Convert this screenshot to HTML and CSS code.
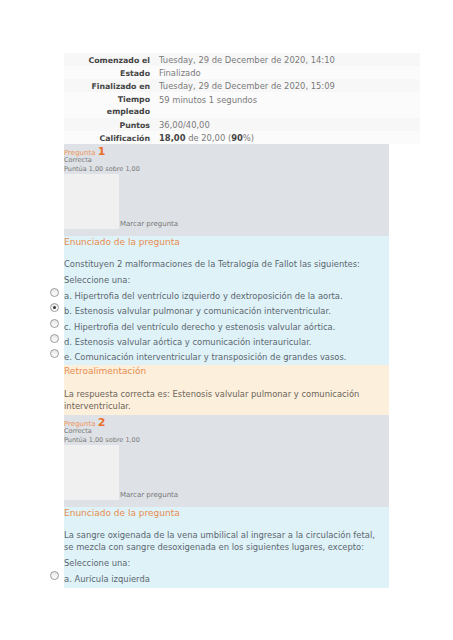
FILE: index.html
```html
<!DOCTYPE html>
<html lang="es">
<head>
<meta charset="utf-8">
<link rel="stylesheet" href="styles.css">
</head>
<body>
<div class="page">
  <table class="summary">
    <tr><th>Comenzado el</th><td>Tuesday, 29 de December de 2020, 14:10</td></tr>
    <tr><th>Estado</th><td>Finalizado</td></tr>
    <tr><th>Finalizado en</th><td>Tuesday, 29 de December de 2020, 15:09</td></tr>
    <tr class="two"><th>Tiempo<br>empleado</th><td>59 minutos 1 segundos</td></tr>
    <tr><th>Puntos</th><td>36,00/40,00</td></tr>
    <tr><th>Calificación</th><td><b>18,00</b> de 20,00 (<b>90</b>%)</td></tr>
  </table>

  <div class="que">
    <div class="info">
      <div class="qno">Pregunta <span class="num">1</span></div>
      <div class="state">Correcta</div>
      <div class="grade">Puntúa 1,00 sobre 1,00</div>
      <div class="flagrow"><div class="flagbox"></div><span class="flag">Marcar pregunta</span></div>
    </div>
    <div class="formulation">
      <div class="head">Enunciado de la pregunta</div>
      <p class="qtext">Constituyen 2 malformaciones de la Tetralogía de Fallot las siguientes:</p>
      <div class="prompt">Seleccione una:</div>
      <div class="opt"><span class="radio"></span>a. Hipertrofia del ventrículo izquierdo y dextroposición de la aorta.</div>
      <div class="opt"><span class="radio on"></span>b. Estenosis valvular pulmonar y comunicación interventricular.</div>
      <div class="opt"><span class="radio"></span>c. Hipertrofia del ventrículo derecho y estenosis valvular aórtica.</div>
      <div class="opt"><span class="radio"></span>d. Estenosis valvular aórtica y comunicación interauricular.</div>
      <div class="opt"><span class="radio"></span>e. Comunicación interventricular y transposición de grandes vasos.</div>
    </div>
    <div class="feedback">
      <div class="head">Retroalimentación</div>
      <p class="ftext">La respuesta correcta es: Estenosis valvular pulmonar y comunicación interventricular.</p>
    </div>
  </div>

  <div class="que">
    <div class="info">
      <div class="qno">Pregunta <span class="num">2</span></div>
      <div class="state">Correcta</div>
      <div class="grade">Puntúa 1,00 sobre 1,00</div>
      <div class="flagrow"><div class="flagbox"></div><span class="flag">Marcar pregunta</span></div>
    </div>
    <div class="formulation">
      <div class="head">Enunciado de la pregunta</div>
      <p class="qtext nowrap">La sangre oxigenada de la vena umbilical al ingresar a la circulación fetal,<br>se mezcla con sangre desoxigenada en los siguientes lugares, excepto:</p>
      <div class="prompt">Seleccione una:</div>
      <div class="opt"><span class="radio"></span>a. Aurícula izquierda</div>
    </div>
  </div>
</div>
</body>
</html>
```

FILE: styles.css
```css
* { box-sizing: border-box; }
body {
  margin: 0;
  background: #fff;
  font-family: "DejaVu Sans", sans-serif;
  color: #666;
}
.page {
  padding: 53px 0 0 64px;
}
.summary {
  border-collapse: collapse;
  width: 356px;
  background: #f7f7f7;
}
.summary tr:nth-child(even) { background: #fbfbfb; }
.summary th {
  width: 94px;
  text-align: right;
  font-weight: bold;
  font-size: 7.8px;
  color: #444;
  padding: 2px 8px 0 0;
  line-height: 11px;
  vertical-align: top;
}
.summary td {
  padding: 2px 0 0 1px;
  font-size: 8.4px;
  line-height: 11px;
  vertical-align: top;
  color: #7a7a7a;
}
.summary .two th, .summary .two td { line-height: 12px; }
.summary td b { color: #444; }

.que {
  width: 325px;
}
.info {
  background: #dee2e6;
  height: 92px;
  padding-top: 3px;
  font-size: 6.5px;
  color: #777;
}
.qno, .state, .grade { height: 9px; line-height: 9px; }
.qno { color: #f0955a; font-size: 7px; }
.qno .num { color: #e96f2d; font-weight: bold; font-size: 11px; line-height: 9px; }
.flagrow {
  display: flex;
  align-items: flex-end;
}
.flagbox {
  width: 55px;
  height: 55px;
  background: #f0f0f0;
}
.flag { padding-left: 1px; line-height: 8px; font-size: 7px; margin-bottom: 1px; }

.formulation {
  background: #dff2f7;
  padding: 0;
  font-size: 8.4px;
  color: #5b6670;
}
.head {
  color: #e88c4f;
  font-size: 9px;
  line-height: 12px;
}
.qtext {
  margin: 10px 0 4px;
  line-height: 12px;
}
.qtext.nowrap { white-space: nowrap; }
.prompt { line-height: 13px; margin-bottom: 2px; }
.opt {
  display: flex;
  align-items: flex-start;
  line-height: 15.3px;
}
.radio {
  flex: none;
  width: 9px;
  height: 9px;
  margin: -1px 5px 0 -14px;
  border: 1px solid #9a9a9a;
  border-radius: 50%;
  background: linear-gradient(#e6e6e6, #fff);
  position: relative;
}
.radio.on::after {
  content: "";
  position: absolute;
  left: 2px; top: 2px;
  width: 3px; height: 3px;
  border-radius: 50%;
  background: #333;
}
.feedback {
  background: #fcefdc;
  padding: 0 0 3px;
  font-size: 8.4px;
  color: #6b6458;
}
.ftext {
  margin: 12px 0 0;
  line-height: 11.5px;
}
```
